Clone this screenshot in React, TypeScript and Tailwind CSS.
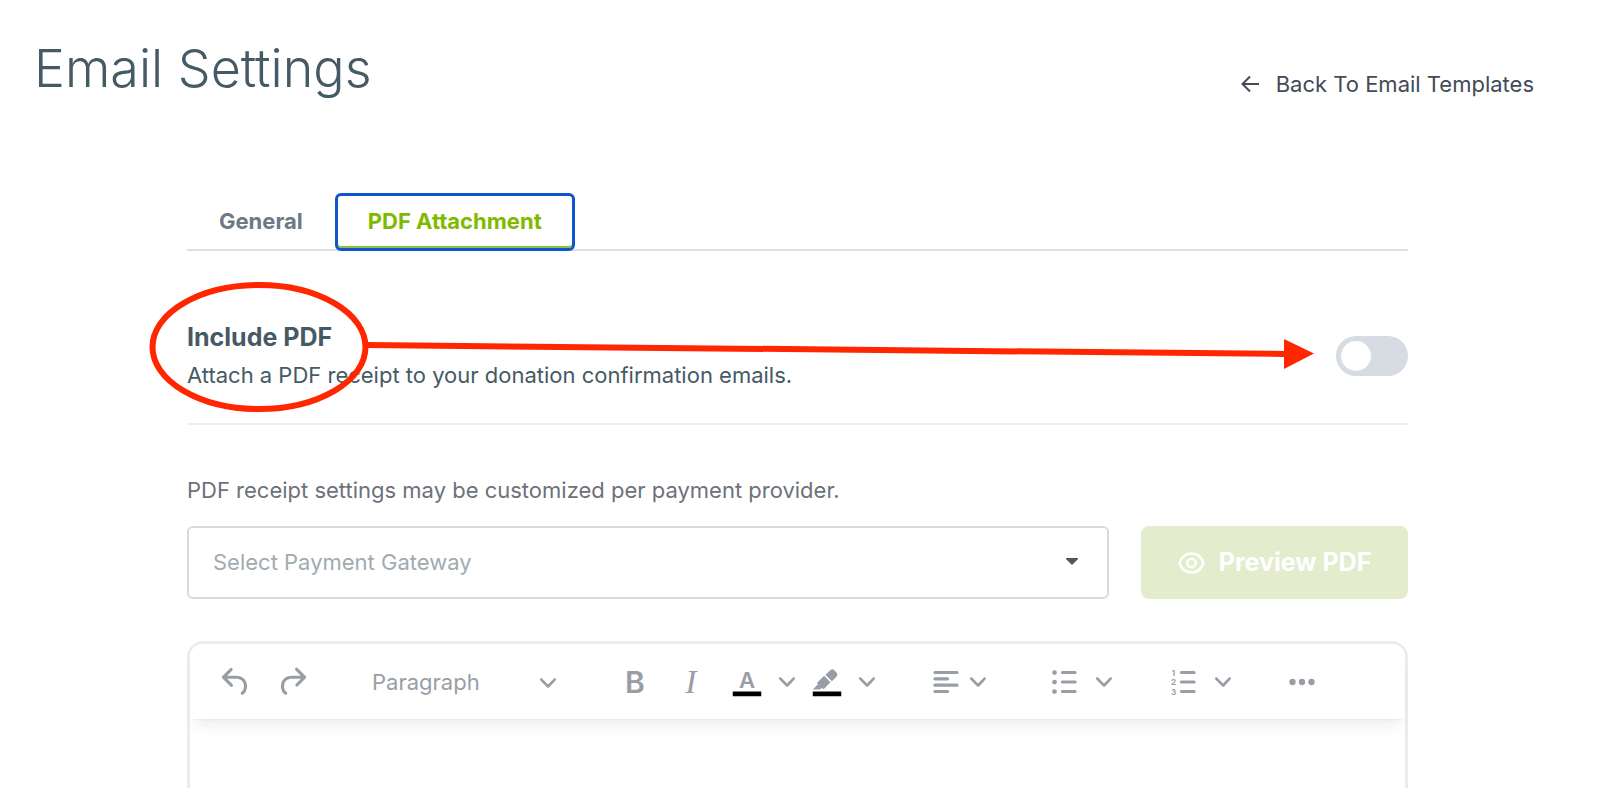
import React, { useState } from 'react';

type IconProps = { children: React.ReactNode };

const Icon: React.FC<IconProps> = ({ children }) => (
    <svg className="w-[38px] h-[38px] block" viewBox="0 0 24 24" fill="currentColor" aria-hidden="true">
        {children}
    </svg>
);

const Chevron: React.FC = () => (
    <svg className="w-4 h-4 block" viewBox="0 0 10 10" fill="currentColor" aria-hidden="true">
        <path d="M8.7 2.2c.3-.3.8-.3 1 0 .4.4.4.9 0 1.2L5.7 7.8c-.3.3-.9.3-1.2 0L.2 3.4a.8.8 0 0 1 0-1.2c.3-.3.8-.3 1.1 0L5 6l3.7-3.8Z" />
    </svg>
);

const ToolButton: React.FC<{ label: string; children: React.ReactNode }> = ({ label, children }) => (
    <button type="button" aria-label={label} className="shrink-0 flex items-center justify-center min-w-4 h-[38px]">
        {children}
    </button>
);

const Toolbar: React.FC = () => (
    <div
        role="toolbar"
        aria-label="Editor"
        className="h-[75px] shrink-0 flex items-center pl-[27px] rounded-t-[13px] bg-white text-[#999ea6] shadow-[0_3px_3px_-3px_rgba(34,47,62,0.12),0_13px_13px_-6px_rgba(34,47,62,0.08)]"
    >
        <div className="flex items-center gap-[18px]">
            <ToolButton label="Undo">
                <Icon>
                    <path d="M6.4 8H12c3.7 0 6.2 2 6.8 5.1.6 2.7-.4 5.6-2.3 6.8a1 1 0 0 1-1-1.8c1.1-.6 1.8-2.7 1.4-4.6-.5-2.1-2.1-3.5-4.9-3.5H6.4l3.3 3.3a1 1 0 1 1-1.4 1.4l-5-5a1 1 0 0 1 0-1.4l5-5a1 1 0 0 1 1.4 1.4L6.4 8Z" />
                </Icon>
            </ToolButton>
            <ToolButton label="Redo">
                <Icon>
                    <path d="M17.6 10H12c-2.8 0-4.4 1.4-4.9 3.5-.4 2 .3 4 1.4 4.6a1 1 0 1 1-1 1.8c-2-1.2-2.9-4.1-2.3-6.8.6-3 3-5.1 6.8-5.1h5.6l-3.3-3.3a1 1 0 1 1 1.4-1.4l5 5a1 1 0 0 1 0 1.4l-5 5a1 1 0 0 1-1.4-1.4l3.3-3.3Z" />
                </Icon>
            </ToolButton>
        </div>

        <button type="button" className="ml-[61px] w-[184px] pt-0.5 shrink-0 flex items-center justify-between text-[22px]">
            Paragraph
            <Chevron />
        </button>

        <div className="ml-[60px] flex items-center gap-[18px]">
            <ToolButton label="Bold">
                <span className="w-[38px] text-[30px] leading-[38px] font-semibold">B</span>
            </ToolButton>
            <ToolButton label="Italic">
                <span className="w-[38px] font-['Liberation_Serif',serif] text-[34px] leading-[38px] italic">I</span>
            </ToolButton>
            <div className="flex items-center gap-[13px]">
                <ToolButton label="Text color">
                    <Icon>
                        <path d="M3 18h18v3H3z" fill="#000" />
                        <text x="12" y="16" textAnchor="middle" fontSize="14" fontWeight="600">A</text>
                    </Icon>
                </ToolButton>
                <ToolButton label="Text color menu"><Chevron /></ToolButton>
                <ToolButton label="Background color">
                    <Icon>
                        <path d="M3 18h18v3H3z" fill="#000" />
                        <path d="M7.7 16.7H3l3.3-3.3-.7-.8L10.2 8l4 4.1-4 4.2c-.2.2-.6.2-.8 0l-.6-.7-1.1 1.1Zm5-7.5L11 7.4l3-2.9a2 2 0 0 1 2.6 0L18 6c.7.7.7 2 0 2.7l-2.9 2.9-1.8-1.8-.5-.6Z" />
                    </Icon>
                </ToolButton>
                <ToolButton label="Background color menu"><Chevron /></ToolButton>
            </div>
        </div>

        <div className="ml-[52px] flex items-center gap-[5px]">
            <ToolButton label="Align left">
                <Icon>
                    <path d="M5 5h14a1 1 0 0 1 0 2H5a1 1 0 1 1 0-2Zm0 4h8a1 1 0 0 1 0 2H5a1 1 0 1 1 0-2Zm0 4h14a1 1 0 0 1 0 2H5a1 1 0 0 1 0-2Zm0 4h8a1 1 0 0 1 0 2H5a1 1 0 0 1 0-2Z" />
                </Icon>
            </ToolButton>
            <ToolButton label="Alignment menu"><Chevron /></ToolButton>
        </div>

        <div className="ml-[59px] flex items-center gap-[13px]">
            <ToolButton label="Bullet list">
                <Icon>
                    <path d="M11 5h8a1 1 0 0 1 0 2h-8a1 1 0 0 1 0-2Zm0 6h8a1 1 0 0 1 0 2h-8a1 1 0 0 1 0-2Zm0 6h8a1 1 0 0 1 0 2h-8a1 1 0 0 1 0-2Z" />
                    <circle cx="6" cy="6" r="1.5" />
                    <circle cx="6" cy="12" r="1.5" />
                    <circle cx="6" cy="18" r="1.5" />
                </Icon>
            </ToolButton>
            <ToolButton label="Bullet list menu"><Chevron /></ToolButton>
        </div>

        <div className="ml-[52px] flex items-center gap-[13px]">
            <ToolButton label="Numbered list">
                <Icon>
                    <path d="M11 5h8a1 1 0 0 1 0 2h-8a1 1 0 0 1 0-2Zm0 6h8a1 1 0 0 1 0 2h-8a1 1 0 0 1 0-2Zm0 6h8a1 1 0 0 1 0 2h-8a1 1 0 0 1 0-2Z" />
                    <g fontSize="5" fontWeight="700" textAnchor="middle">
                        <text x="6" y="8">1</text>
                        <text x="6" y="14">2</text>
                        <text x="6" y="20">3</text>
                    </g>
                </Icon>
            </ToolButton>
            <ToolButton label="Numbered list menu"><Chevron /></ToolButton>
        </div>

        <div className="ml-[52px]">
            <ToolButton label="More">
                <Icon>
                    <circle cx="6" cy="12" r="2" />
                    <circle cx="12" cy="12" r="2" />
                    <circle cx="18" cy="12" r="2" />
                </Icon>
            </ToolButton>
        </div>
    </div>
);

const App: React.FC = () => {
    const [includePdf, setIncludePdf] = useState(false);

    return (
        <div className="h-screen overflow-hidden flex flex-col bg-white font-[Inter,sans-serif] text-[#455a64]">
            <header className="flex items-start justify-between pl-[34px] pr-[66px] pt-[37px]">
                <h1 className="text-[52px] leading-[64px] font-light">Email Settings</h1>
                <a href="#templates" className="mt-[31px] flex items-center gap-4 text-[22px] leading-8 text-[#424b57]">
                    <svg className="w-5 h-5" viewBox="0 0 20 20" fill="none" stroke="currentColor" strokeWidth="2" aria-hidden="true">
                        <path d="M19 10H3M10 2.500 2.500 10l7.500 7.500" />
                    </svg>
                    Back To Email Templates
                </a>
            </header>

            <main className="flex-1 flex flex-col pl-[187px] pr-48 pt-[92px]">
                {/* TABS */}
                <div role="tablist" className="flex h-[58px] border-b-2 border-[#dfe0e2] text-[22px] font-bold">
                    <button type="button" role="tab" aria-selected="false" className="h-[56px] px-8 text-[#6b7a85]">
                        General
                    </button>
                    <button
                        type="button"
                        role="tab"
                        aria-selected="true"
                        className="h-[58px] px-[30px] pb-0.5 rounded-md border-3 border-[#1055d0] bg-white text-[#7fba00] shadow-[inset_0_-2px_0_#8cc33c]"
                    >
                        PDF Attachment
                    </button>
                </div>

                {/* INCLUDE PDF */}
                <section className="relative flex items-center justify-between pt-[68px] pb-[30px] border-b-2 border-[#eeeff0]">
                    <div>
                        <h2 className="text-[25px] leading-9 font-bold">
                            <label htmlFor="include-pdf">Include PDF</label>
                        </h2>
                        <p className="mt-0.5 text-[22px] leading-9">Attach a PDF receipt to your donation confirmation emails.</p>
                    </div>
                    <input
                        id="include-pdf"
                        type="checkbox"
                        role="switch"
                        checked={includePdf}
                        onChange={(e) => setIncludePdf(e.target.checked)}
                        className="appearance-none shrink-0 flex items-center w-[72px] h-10 px-[5px] rounded-full bg-[#d7dbe2] checked:bg-[#7fba00] checked:justify-end before:block before:w-[30px] before:h-[30px] before:rounded-full before:bg-white"
                    />
                    <svg className="absolute -left-10 top-6 w-[1170px] h-[140px] pointer-events-none" viewBox="147 275 1170 140" aria-hidden="true">
                        <ellipse cx="259" cy="347" rx="106.500" ry="62" fill="none" stroke="#ff2600" strokeWidth="6" />
                        <path d="M367 345 1286 354" stroke="#ff2600" strokeWidth="6" />
                        <path d="M1284 339v30l30-15.500Z" fill="#ff2600" />
                    </svg>
                </section>

                {/* GATEWAY */}
                <label htmlFor="gateway" className="mt-[47px] text-[22px] leading-9 text-[#6e717a]">
                    PDF receipt settings may be customized per payment provider.
                </label>
                <div className="mt-[18px] flex gap-8">
                    <div className="relative flex-1">
                        <select
                            id="gateway"
                            defaultValue=""
                            className="appearance-none w-full h-[73px] pl-6 rounded-md border-2 border-[#d9dadc] bg-white text-[22px] text-[#a1abb0]"
                        >
                            <option value="">Select Payment Gateway</option>
                        </select>
                        <svg className="absolute right-[31px] top-8 w-3 h-[7px] pointer-events-none" viewBox="0 0 12 7" fill="#455a64" aria-hidden="true">
                            <path d="M0 0h12v1L6 7 0 1Z" />
                        </svg>
                    </div>
                    <button type="button" className="w-[267px] h-[73px] flex items-center justify-center gap-[14px] rounded-lg bg-[#e4ecce] text-white text-[25px] font-bold">
                        <svg className="w-[27px] h-[22px]" viewBox="0 0 27 22" fill="none" stroke="currentColor" strokeWidth="2.500" aria-hidden="true">
                            <path d="M1.500 11C3.500 5 8 1.500 13.500 1.500S23.500 5 25.500 11C23.500 17 19 20.500 13.500 20.500S3.500 17 1.500 11Z" strokeLinejoin="round" />
                            <circle cx="13.500" cy="11" r="4.200" />
                        </svg>
                        Preview PDF
                    </button>
                </div>

                {/* EDITOR */}
                <div className="mt-[42px] flex-1 flex flex-col rounded-t-2xl border-3 border-b-0 border-[#ebecec]">
                    <Toolbar />
                    <textarea aria-label="PDF content" className="flex-1 w-full resize-none p-6 text-[22px] outline-none bg-transparent" />
                </div>
            </main>
        </div>
    );
};

export default App;
